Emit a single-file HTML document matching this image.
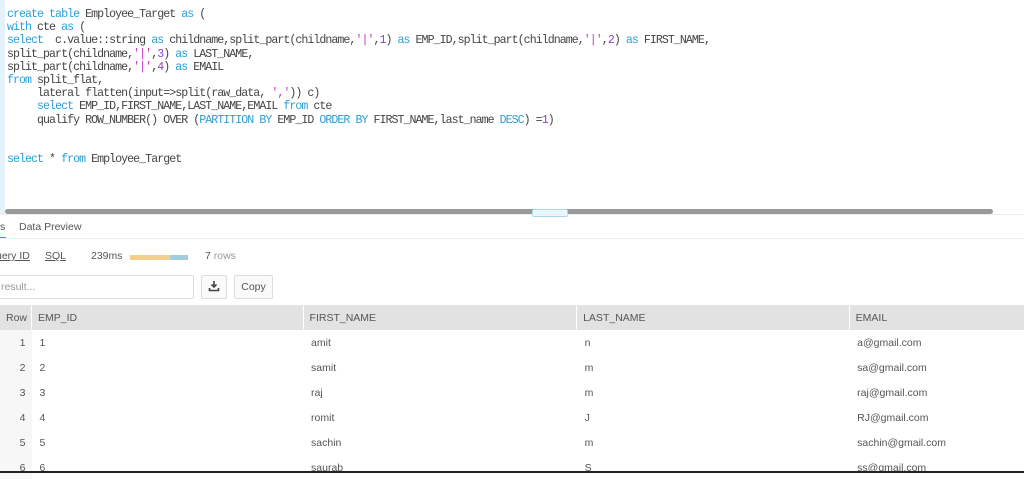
<!DOCTYPE html>
<html><head><meta charset="utf-8"><style>
*{margin:0;padding:0;box-sizing:border-box}
body{width:1024px;height:473px;overflow:hidden;background:#fff;font-family:"Liberation Sans",sans-serif;position:relative;color:#555}
.strip{position:absolute;left:0;top:0;width:5px;height:214px;background:#e6f2fa}
pre{position:absolute;left:7px;top:8px;font-family:"Liberation Mono",monospace;font-size:11.6px;line-height:13.2px;color:#444;letter-spacing:-0.95px}
.k{color:#2a9fd6}.s{color:#c53cc5}.n{color:#8a3fcf}
.sb{position:absolute;left:5px;top:209px;width:988px;height:5px;background:#999;border-radius:3px}
.hd{position:absolute;left:532px;top:209px;width:36px;height:8px;border:1px solid #a8d8ea;background:#eaf7fc;border-radius:2px}
.line1{position:absolute;left:0;top:214px;width:1024px;height:1px;background:#eee}
.tabs{position:absolute;top:221px;font-size:10.5px;color:#555}
.tabul{position:absolute;left:0;top:237px;width:6px;height:2px;background:#29a3d6}
.line2{position:absolute;left:0;top:238px;width:1024px;height:1px;background:#eee}
.info{position:absolute;top:250px;font-size:10.5px;color:#555}
.u{text-decoration:underline}
.bar{position:absolute;left:130px;top:255px;width:58px;height:5px;background:#9fcfdc}
.bar i{display:block;width:40px;height:5px;background:#f3cf8c}
.inp{position:absolute;left:-4px;top:275px;width:198px;height:24px;border:1px solid #ddd;border-radius:2px;font-size:10.5px;color:#999;padding:5px 0 0 4px}
.btn{position:absolute;top:275px;height:24px;border:1px solid #ddd;border-radius:2px;background:#fafafa;font-size:10.5px;color:#555;text-align:center;padding-top:5px}
table{position:absolute;left:0;top:305px;border-collapse:collapse;font-size:10.5px;table-layout:fixed}
th{background:#e2e2e2;font-weight:normal;text-align:left;height:25px;padding-left:6px;color:#555;border-left:1px solid #fff}
th:first-child{border-left:none;text-align:right;padding-right:4px}
td{height:24.9px;padding-left:8px;color:#555;padding-top:2px}
td:first-child{background:#f7f7f7;text-align:right;padding-right:6px}
.bot{position:absolute;left:0;top:471px;width:1024px;height:2px;background:#222}
</style></head><body>
<div class="strip"></div>
<pre><span class="k">create table</span> Employee_Target <span class="k">as</span> (
<span class="k">with</span> cte <span class="k">as</span> (
<span class="k">select</span>  c.value::string <span class="k">as</span> childname,split_part(childname,<span class="s">'|'</span>,<span class="n">1</span>) <span class="k">as</span> EMP_ID,split_part(childname,<span class="s">'|'</span>,<span class="n">2</span>) <span class="k">as</span> FIRST_NAME,
split_part(childname,<span class="s">'|'</span>,<span class="n">3</span>) <span class="k">as</span> LAST_NAME,
split_part(childname,<span class="s">'|'</span>,<span class="n">4</span>) <span class="k">as</span> EMAIL
<span class="k">from</span> split_flat,
     lateral flatten(input=&gt;split(raw_data, <span class="s">','</span>)) c)
     <span class="k">select</span> EMP_ID,FIRST_NAME,LAST_NAME,EMAIL <span class="k">from</span> cte
     qualify ROW_NUMBER() OVER (<span class="k">PARTITION BY</span> EMP_ID <span class="k">ORDER BY</span> FIRST_NAME,last_name <span class="k">DESC</span>) =<span class="n">1</span>)


<span class="k">select</span> * <span class="k">from</span> Employee_Target</pre>
<div class="sb"></div><div class="hd"></div>
<div class="line1"></div>
<div class="tabs" style="left:0">s</div>
<div class="tabs" style="left:19px">Data Preview</div>
<div class="tabul"></div><div class="line2"></div>
<div class="info u" style="left:-4px">uery ID</div>
<div class="info u" style="left:45px">SQL</div>
<div class="info" style="left:91px">239ms</div>
<div class="bar"><i></i></div>
<div class="info" style="left:205px">7 <span style="color:#999">rows</span></div>
<div class="inp">result...</div>
<div class="btn" style="left:201px;width:26px"><svg width="12" height="12" viewBox="0 0 12 12" style="margin-top:-1px"><path d="M6 1v6M3.5 4.5L6 7l2.5-2.5M1.5 8v2.5h9V8" stroke="#444" stroke-width="1.6" fill="none"/></svg></div>
<div class="btn" style="left:234px;width:39px">Copy</div>
<table>
<colgroup><col style="width:30px"><col style="width:272px"><col style="width:274px"><col style="width:273px"><col style="width:175px"></colgroup>
<tr><th>Row</th><th>EMP_ID</th><th>FIRST_NAME</th><th>LAST_NAME</th><th>EMAIL</th></tr>
<tr><td>1</td><td>1</td><td>amit</td><td>n</td><td>a@gmail.com</td></tr>
<tr><td>2</td><td>2</td><td>samit</td><td>m</td><td>sa@gmail.com</td></tr>
<tr><td>3</td><td>3</td><td>raj</td><td>m</td><td>raj@gmail.com</td></tr>
<tr><td>4</td><td>4</td><td>romit</td><td>J</td><td>RJ@gmail.com</td></tr>
<tr><td>5</td><td>5</td><td>sachin</td><td>m</td><td>sachin@gmail.com</td></tr>
<tr><td>6</td><td>6</td><td>saurab</td><td>S</td><td>ss@gmail.com</td></tr>
</table>
<div class="bot"></div>
</body></html>
